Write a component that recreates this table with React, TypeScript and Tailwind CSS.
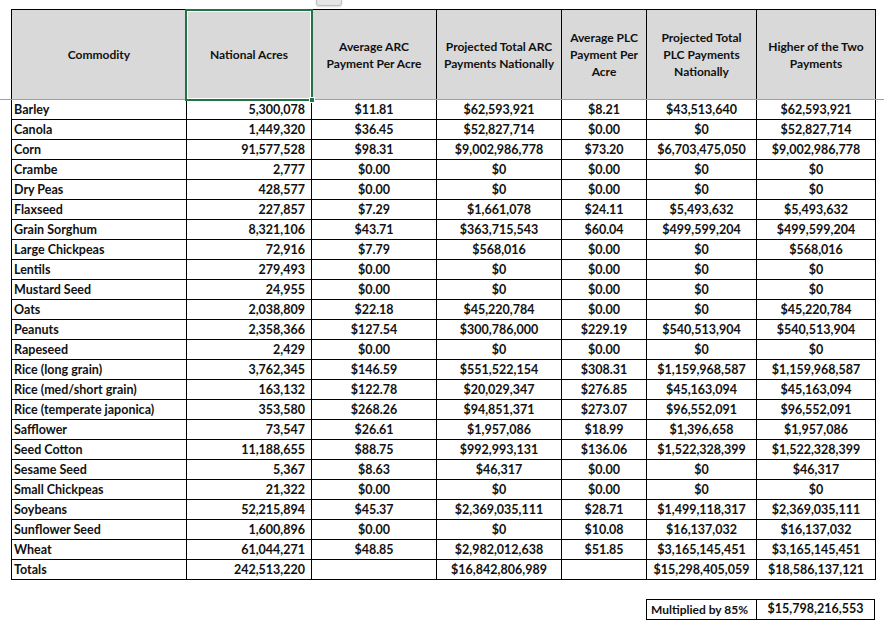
import React from "react";

const rows: string[][] = [
  ["Barley", "5,300,078", "$11.81", "$62,593,921", "$8.21", "$43,513,640", "$62,593,921"],
  ["Canola", "1,449,320", "$36.45", "$52,827,714", "$0.00", "$0", "$52,827,714"],
  ["Corn", "91,577,528", "$98.31", "$9,002,986,778", "$73.20", "$6,703,475,050", "$9,002,986,778"],
  ["Crambe", "2,777", "$0.00", "$0", "$0.00", "$0", "$0"],
  ["Dry Peas", "428,577", "$0.00", "$0", "$0.00", "$0", "$0"],
  ["Flaxseed", "227,857", "$7.29", "$1,661,078", "$24.11", "$5,493,632", "$5,493,632"],
  ["Grain Sorghum", "8,321,106", "$43.71", "$363,715,543", "$60.04", "$499,599,204", "$499,599,204"],
  ["Large Chickpeas", "72,916", "$7.79", "$568,016", "$0.00", "$0", "$568,016"],
  ["Lentils", "279,493", "$0.00", "$0", "$0.00", "$0", "$0"],
  ["Mustard Seed", "24,955", "$0.00", "$0", "$0.00", "$0", "$0"],
  ["Oats", "2,038,809", "$22.18", "$45,220,784", "$0.00", "$0", "$45,220,784"],
  ["Peanuts", "2,358,366", "$127.54", "$300,786,000", "$229.19", "$540,513,904", "$540,513,904"],
  ["Rapeseed", "2,429", "$0.00", "$0", "$0.00", "$0", "$0"],
  ["Rice (long grain)", "3,762,345", "$146.59", "$551,522,154", "$308.31", "$1,159,968,587", "$1,159,968,587"],
  ["Rice (med/short grain)", "163,132", "$122.78", "$20,029,347", "$276.85", "$45,163,094", "$45,163,094"],
  ["Rice (temperate japonica)", "353,580", "$268.26", "$94,851,371", "$273.07", "$96,552,091", "$96,552,091"],
  ["Safflower", "73,547", "$26.61", "$1,957,086", "$18.99", "$1,396,658", "$1,957,086"],
  ["Seed Cotton", "11,188,655", "$88.75", "$992,993,131", "$136.06", "$1,522,328,399", "$1,522,328,399"],
  ["Sesame Seed", "5,367", "$8.63", "$46,317", "$0.00", "$0", "$46,317"],
  ["Small Chickpeas", "21,322", "$0.00", "$0", "$0.00", "$0", "$0"],
  ["Soybeans", "52,215,894", "$45.37", "$2,369,035,111", "$28.71", "$1,499,118,317", "$2,369,035,111"],
  ["Sunflower Seed", "1,600,896", "$0.00", "$0", "$10.08", "$16,137,032", "$16,137,032"],
  ["Wheat", "61,044,271", "$48.85", "$2,982,012,638", "$51.85", "$3,165,145,451", "$3,165,145,451"],
  ["Totals", "242,513,220", "", "$16,842,806,989", "", "$15,298,405,059", "$18,586,137,121"],
];

const headers: string[][] = [
  ["Commodity"],
  ["National Acres"],
  ["Average ARC", "Payment Per Acre"],
  ["Projected Total ARC", "Payments Nationally"],
  ["Average PLC", "Payment Per", "Acre"],
  ["Projected Total", "PLC Payments", "Nationally"],
  ["Higher of the Two", "Payments"],
];

export default function App() {
  return (
    <div
      className="relative w-[884px] h-[625px] overflow-hidden bg-white text-[12.5px] font-bold text-[#111]"
      style={{ fontFamily: "Lato, 'Liberation Sans', sans-serif" }}
    >
      <div className="ml-[11px] mt-[9px] w-[865px]">
        <div className="grid grid-cols-[175px_125px_125px_125px_85px_110px_119px] border-l border-t border-black">
          {headers.map((h, i) => (
            <div
              key={i}
              className="h-[90px] bg-[#d9d9d9] border-r border-b border-r-black border-b-[#a0a0a0] flex flex-col items-center justify-center text-center leading-[17px] text-[12px]"
            >
              {h.map((l, j) => (
                <div key={j} className="whitespace-nowrap">{l}</div>
              ))}
            </div>
          ))}
          {rows.map((r, ri) =>
            r.map((c, ci) => (
              <div
                key={ri + "-" + ci}
                className={
                  "h-[20px] border-r border-b border-black flex items-center whitespace-nowrap leading-none pt-[1px] " +
                  (ci === 0 ? "justify-start pl-[2px]" : ci === 1 ? "justify-end pr-[6px]" : "justify-center")
                }
              >
                {c}
              </div>
            ))
          )}
        </div>
        <div className="ml-[635px] mt-[19px] flex w-[229px] h-[21px] border border-black">
          <div className="w-[110px] border-r border-black flex items-center justify-center whitespace-nowrap pr-[4px] text-[12px]">
            Multiplied by 85%
          </div>
          <div className="flex-1 flex items-center justify-center whitespace-nowrap">$15,798,216,553</div>
        </div>
      </div>

      {/* freeze pane line */}
      <div className="absolute left-0 top-[99px] w-[884px] h-[1px] bg-[#a0a0a0]" />

      {/* selected cell */}
      <div className="absolute left-[185px] top-[9px] w-[128px] h-[92px] border-2 border-[#217346]">
        <div className="w-full h-full border border-white" />
      </div>
      <div className="absolute left-[309px] top-[97px] w-[6px] h-[6px] bg-[#217346] border border-white" />

      {/* top tab */}
      <div className="absolute left-[316px] top-[-6px] w-[26px] h-[12px] rounded-[3px] bg-[#e6e6e6] border border-[#bdbdbd] shadow-[0_1px_2px_rgba(0,0,0,0.15)]" />
    </div>
  );
}
